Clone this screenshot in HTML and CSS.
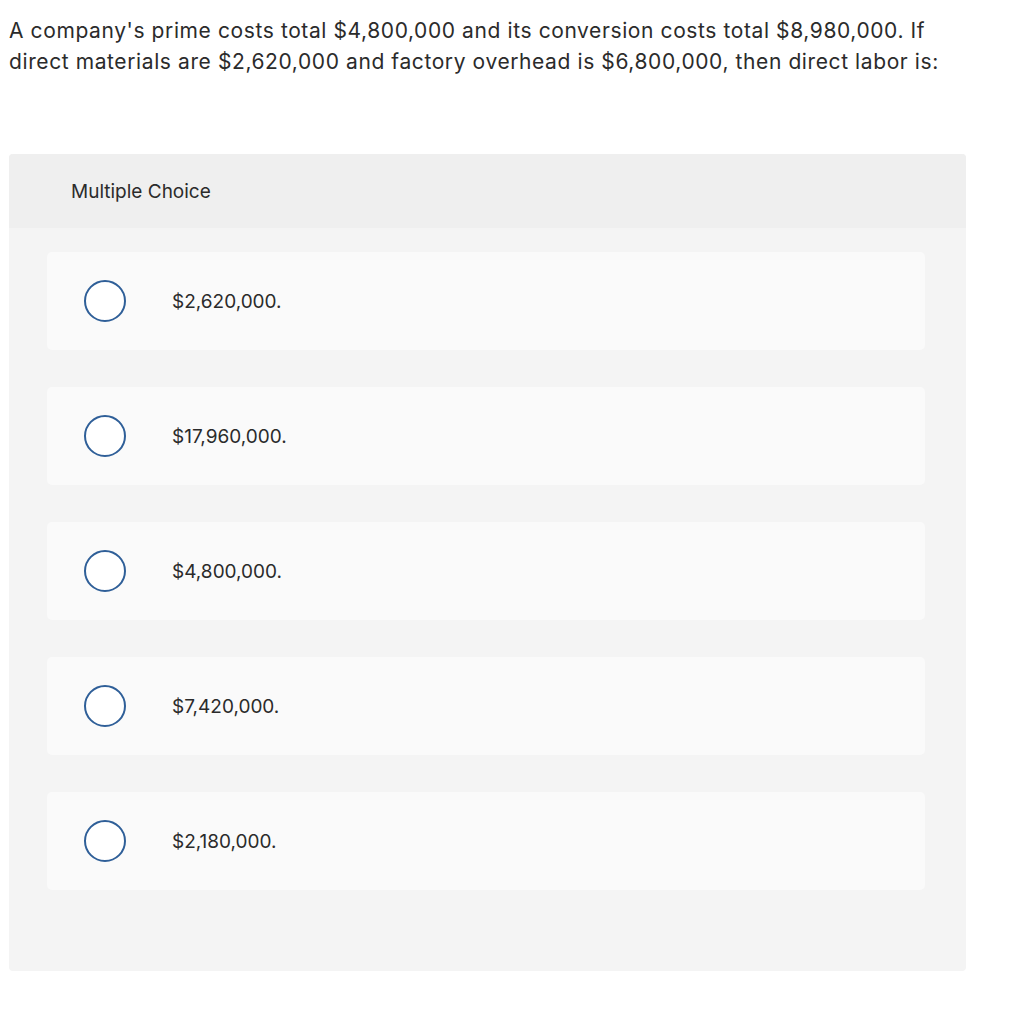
FILE: index.html
```html
<!DOCTYPE html>
<html lang="en">
<head>
<meta charset="utf-8">
<title>Multiple Choice</title>
<link rel="stylesheet" href="styles.css">
</head>
<body>
<div class="page">
  <p class="question">A company's prime costs total $4,800,000 and its conversion costs total $8,980,000. If direct materials are $2,620,000 and factory overhead is $6,800,000, then direct labor is:</p>
  <section class="panel">
    <header class="panel-head">Multiple Choice</header>
    <div class="choices">
      <label class="choice"><span class="radio"></span><span class="choice-text">$2,620,000.</span></label>
      <label class="choice"><span class="radio"></span><span class="choice-text">$17,960,000.</span></label>
      <label class="choice"><span class="radio"></span><span class="choice-text">$4,800,000.</span></label>
      <label class="choice"><span class="radio"></span><span class="choice-text">$7,420,000.</span></label>
      <label class="choice"><span class="radio"></span><span class="choice-text">$2,180,000.</span></label>
    </div>
  </section>
</div>
</body>
</html>
```
FILE: styles.css
```css
html, body {
  margin: 0;
  padding: 0;
  background: #ffffff;
}
body {
  font-family: Inter, "Noto Sans", sans-serif;
  color: #2b2b2b;
}
.page {
  padding: 15px 0 0 9px;
  width: 958px;
}
.question {
  margin: 0;
  font-size: 21px;
  line-height: 31px;
  letter-spacing: 0.6px;
  color: #2b2b2b;
  width: 950px;
}
.panel {
  margin-top: 77px;
  background: #f4f4f4;
  border-radius: 4px;
  overflow: hidden;
  width: 957px;
}
.panel-head {
  background: #efefef;
  height: 74px;
  display: flex;
  align-items: center;
  padding-left: 62px;
  font-size: 19px;
  color: #2b2b2b;
}
.choices {
  display: flex;
  flex-direction: column;
  gap: 37px;
  padding: 24px 41px 81px 38px;
}
.choice {
  height: 98px;
  background: #fafafa;
  border-radius: 5px;
  display: flex;
  align-items: center;
  padding-left: 37px;
}
.radio {
  width: 38px;
  height: 38px;
  border: 2px solid #2f5f98;
  border-radius: 50%;
  background: #ffffff;
  flex: none;
}
.choice-text {
  margin-left: 46px;
  font-size: 19px;
  color: #2b2b2b;
}
```
